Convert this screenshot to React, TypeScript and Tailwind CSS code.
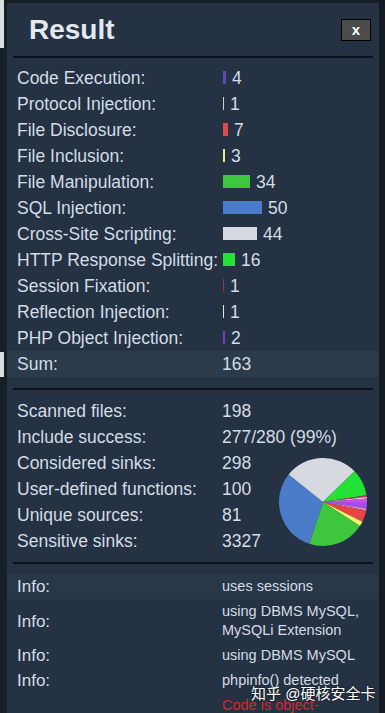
import React from 'react';

type Item = { label: string; n: number; bar: string; pie: string };

const items: Item[] = [
  { label: 'Code Execution:', n: 4, bar: '#5b4bb5', pie: '#a04ef0' },
  { label: 'Protocol Injection:', n: 1, bar: '#d8c8d8', pie: '#e8a0d0' },
  { label: 'File Disclosure:', n: 7, bar: '#dc4a4a', pie: '#e84444' },
  { label: 'File Inclusion:', n: 3, bar: '#eeee80', pie: '#f4f46a' },
  { label: 'File Manipulation:', n: 34, bar: '#3ec63e', pie: '#3ec63e' },
  { label: 'SQL Injection:', n: 50, bar: '#4a7cc9', pie: '#4a7cc9' },
  { label: 'Cross-Site Scripting:', n: 44, bar: '#d6dbe2', pie: '#d6dae0' },
  { label: 'HTTP Response Splitting:', n: 16, bar: '#22e236', pie: '#22e236' },
  { label: 'Session Fixation:', n: 1, bar: '#a03050', pie: '#c0306a' },
  { label: 'Reflection Injection:', n: 1, bar: '#e0e0e8', pie: '#e0e0e8' },
  { label: 'PHP Object Injection:', n: 2, bar: '#7040c0', pie: '#d94ae0' },
];

const stats: [string, string][] = [
  ['Scanned files:', '198'],
  ['Include success:', '277/280 (99%)'],
  ['Considered sinks:', '298'],
  ['User-defined functions:', '100'],
  ['Unique sources:', '81'],
  ['Sensitive sinks:', '3327'],
];

function Pie() {
  const total = items.reduce((s, i) => s + i.n, 0);
  const r = 44;
  const c = 44;
  let acc = 0;
  const paths = items.map((it, idx) => {
    const a0 = (acc / total) * Math.PI * 2;
    acc += it.n;
    const a1 = (acc / total) * Math.PI * 2;
    const x0 = c + r * Math.cos(a0);
    const y0 = c + r * Math.sin(a0);
    const x1 = c + r * Math.cos(a1);
    const y1 = c + r * Math.sin(a1);
    const large = a1 - a0 > Math.PI ? 1 : 0;
    const d = `M${c},${c} L${x0},${y0} A${r},${r} 0 ${large} 1 ${x1},${y1} Z`;
    return <path key={idx} d={d} fill={it.pie} />;
  });
  return (
    <svg width="88" height="88" viewBox="0 0 88 88" className="block">
      {paths}
    </svg>
  );
}

export default function App() {
  return (
    <div
      className="w-[385px] h-[713px] overflow-hidden flex items-start bg-[#161e26] text-[#d4dce6]"
      style={{ fontFamily: "'Liberation Sans', Arial, 'Noto Sans CJK SC', sans-serif" }}
    >
      {/* left background strip */}
      <div className="w-[7px] shrink-0">
        <div className="w-[4px] h-[48px] bg-[#dcdde0]" />
        <div className="h-[304px]" />
        <div className="w-[4px] h-[25px] bg-[#dcdde0]" />
      </div>

      {/* panel */}
      <div className="w-[372px] h-[710px] shrink-0 mt-[3px] bg-[#243243] relative overflow-hidden">
        {/* header */}
        <div className="h-[53px] flex items-center justify-between pl-[22px] pr-[8px]">
          <div className="text-[28px] font-bold leading-none text-[#e4e9ef]">Result</div>
          <div className="w-[30px] h-[22px] bg-[#4b4b49] border border-black flex items-center justify-center text-white font-bold text-[15px] leading-none">
            x
          </div>
        </div>
        <div className="mx-[6px] h-[2px] bg-[#0b121a]" />

        {/* vulnerabilities */}
        <div className="pt-[7px] text-[17.5px]">
          {items.map((it) => (
            <div key={it.label} className="h-[26px] flex items-center px-[10px]">
              <div className="w-[206px] shrink-0 whitespace-nowrap">{it.label}</div>
              <div className="whitespace-nowrap">
                <span
                  className="inline-block h-[13px] mr-[6px] align-baseline"
                  style={{ width: Math.max(1, Math.round(it.n * 0.78)), background: it.bar }}
                />
                {it.n}
              </div>
            </div>
          ))}
          <div className="h-[26px] flex items-center px-[10px] bg-[#2c3b4c]">
            <div className="w-[205px] shrink-0">Sum:</div>
            <div>163</div>
          </div>
        </div>
        <div className="mx-[6px] h-[2px] bg-[#0b121a] mt-[11px]" />

        {/* stats */}
        <div className="pt-[8px] px-[10px] text-[17.5px] grid grid-cols-[205px_57px_1fr] auto-rows-[26px] items-center">
          {stats.map(([k, v], i) => (
            <React.Fragment key={k}>
              <div className="whitespace-nowrap" style={{ gridRow: i + 1, gridColumn: 1 }}>
                {k}
              </div>
              <div
                className="whitespace-nowrap"
                style={{ gridRow: i + 1, gridColumn: i === 1 ? '2 / span 2' : '2' }}
              >
                {v}
              </div>
            </React.Fragment>
          ))}
          <div className="col-start-3 row-start-3 row-span-4 self-center">
            <Pie />
          </div>
        </div>
        <div className="mx-[6px] h-[2px] bg-[#0b121a] mt-[8px]" />

        {/* info */}
        <div className="pt-[10px]">
          {[
            { v: ['uses sessions'], hl: true },
            { v: ['using DBMS MySQL,', 'MySQLi Extension'] },
            { v: ['using DBMS MySQL'] },
            { v: ['phpinfo() detected'] },
          ].map((row, i) => (
            <div
              key={i}
              className={`flex items-center px-[10px] py-[3px] ${row.hl ? 'bg-[#293849]' : ''}`}
            >
              <div className="w-[205px] shrink-0 text-[17px] leading-[19px]">Info:</div>
              <div className="text-[14.5px] leading-[19px]">
                {row.v.map((l) => (
                  <div key={l}>{l}</div>
                ))}
              </div>
            </div>
          ))}
          <div className="flex items-center px-[10px] py-[3px]">
            <div className="w-[205px] shrink-0 text-[17px] leading-[19px]">Info:</div>
            <div className="text-[14.5px] leading-[19px] text-[#d42a2a]">
              <div>Code is object-</div>
              <div>oriented. This is not</div>
              <div>supported yet and can</div>
              <div>lead to false negatives.</div>
            </div>
          </div>
        </div>

        {/* watermark */}
        <div className="absolute left-[244px] top-[680px] text-[15px] text-white whitespace-nowrap [text-shadow:0_0_2px_rgba(0,0,0,0.8)]">
          知乎 @硬核安全卡
        </div>
      </div>

      {/* right strip */}
      <div className="flex-1 h-full bg-[#131a21]" />
    </div>
  );
}
